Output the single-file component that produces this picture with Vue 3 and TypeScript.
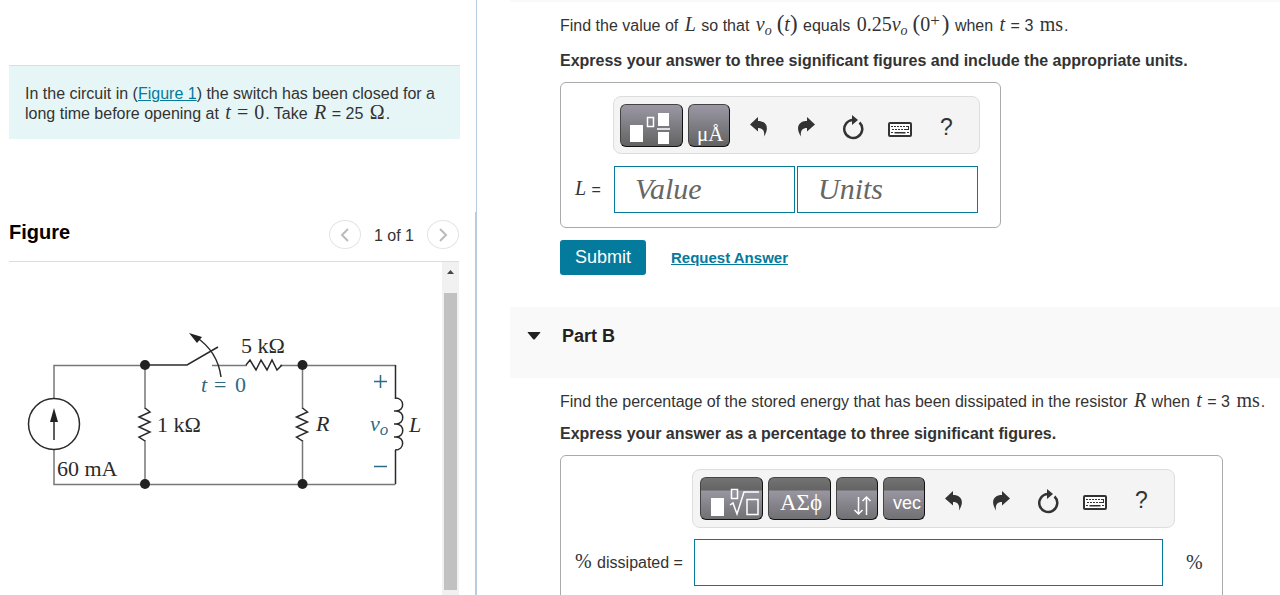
<script setup lang="ts">
import { ref } from 'vue'

const value = ref('')
const units = ref('')
const dissipated = ref('')

const tools = ['Undo', 'Redo', 'Reset', 'Keyboard shortcuts', 'Help']
const keysTop = [3, 6, 9, 12, 15, 18]
const keysMid = [4, 7, 10, 13, 16]
</script>

<template>
  <div class="page">
    <aside class="left">
      <div class="left-top">
        <p class="problem">
          In the circuit in (<a href="#figure">Figure 1</a>) the switch has been closed for a long time before opening at
          <span class="math"><i>t</i> <span class="rel">=</span> 0</span>. Take <span class="math"><i>R</i></span> = 25
          <span class="math">Ω</span>.
        </p>
      </div>
      <section id="figure" class="figure">
        <header class="figure-head">
          <h2>Figure</h2>
          <nav class="pager" aria-label="Figures">
            <button type="button" class="round" aria-label="Previous figure">
              <svg width="10" height="14" viewBox="0 0 10 14"><path d="M8 1 2 7l6 6" /></svg>
            </button>
            <span>1 of 1</span>
            <button type="button" class="round" aria-label="Next figure">
              <svg width="10" height="14" viewBox="0 0 10 14"><path d="m2 1 6 6-6 6" /></svg>
            </button>
          </nav>
        </header>
        <div class="viewer">
          <svg class="circuit" width="433" height="320" viewBox="9 262 433 320" role="img" aria-label="Circuit diagram">
            <g class="wire">
              <path d="M54 399V365.500H145M54 449V484.500H395.500M145 365V409M145 440V484M302.500 365V409M302.500 440V484M212 365.500H247M280 365.500H395.500" />
            </g>
            <g class="line">
              <path d="M145 365H187L218 347M395.500 365V399M395.500 450V484" />
              <path d="M221 377C219 362 211 347 196 337" />
              <circle cx="54" cy="424" r="25.500" />
              <path d="M54 440V417" />
              <path d="M145 408l5 4-11 5 11 5-11 5 11 5-11 5 6 4" />
              <path d="M302.500 408l5 4-11 5 11 5-11 5 11 5-11 5 6 4" />
              <path d="M246 365l4-5 6 10 5-10 6 10 5-10 5 10 5-5" />
              <path d="M395 398c10 0 10 13 1 13h-2h2c9 0 9 13 0 13h-2h2c9 0 9 13 0 13h-2h2c9 0 9 13-1 13" />
            </g>
            <path d="M54 408l-4 14h8zM189 333l13 4-5 6z" fill="#222" />
            <g fill="#222">
              <circle cx="145" cy="365" r="5" /><circle cx="302.500" cy="365" r="5" />
              <circle cx="145" cy="484" r="5" /><circle cx="302.500" cy="484" r="5" />
            </g>
            <g class="label">
              <text x="241" y="353">5 kΩ</text>
              <text x="157" y="432">1 kΩ</text>
              <text x="57" y="476">60 mA</text>
              <text x="316" y="431" font-style="italic">R</text>
              <text x="409" y="432" font-style="italic">L</text>
            </g>
            <g class="label blue">
              <text x="201" y="392" font-style="italic">t</text>
              <text x="214" y="392">=</text>
              <text x="235" y="392">0</text>
              <text x="370" y="431" font-style="italic">v<tspan dy="4" font-size="17">o</tspan></text>
            </g>
            <path d="M374 381.500h13M380.500 375v13M374 466.500h13" stroke="#2e6a86" stroke-width="1.500" />
          </svg>
          <div class="scrollbar">
            <svg width="7" height="4" viewBox="0 0 7 4"><path d="M0 4 3.500 0 7 4z" fill="#444" /></svg>
            <div class="thumb"></div>
          </div>
        </div>
      </section>
    </aside>

    <main class="right">
      <div class="strip"></div>
      <section class="part first">
        <p class="ask">
          Find the value of <span class="math"><i>L</i></span> so that
          <span class="math"><i>v<sub>o</sub></i> <span class="paren">(</span><i>t</i><span class="paren">)</span></span> equals
          <span class="math">0.25<i>v<sub>o</sub></i> <span class="paren">(</span>0<sup>+</sup><span class="paren">)</span></span> when
          <span class="math"><i>t</i></span> = 3 <span class="math">ms</span>.
        </p>
        <p class="instruction">Express your answer to three significant figures and include the appropriate units.</p>
        <form class="answer box-a" @submit.prevent>
          <div class="toolbar bar-a">
            <button type="button" class="tile wide" aria-label="Templates">
              <svg width="61" height="40" viewBox="0 0 61 40">
                <path d="M9 20h13v17H9zM37 8h11v13H37zM37 27h11v12H37z" fill="#fff" />
                <path d="M26.500 12.500h6v9h-6zM36 24h13" class="thin" />
              </svg>
            </button>
            <button type="button" class="tile" aria-label="Symbols">
              <svg width="40" height="40" viewBox="0 0 40 40"><text x="8" y="36" class="greek small">μÅ</text></svg>
            </button>
            <button v-for="tool in tools" :key="tool" type="button" class="tool" :aria-label="tool">
              <svg v-if="tool === 'Undo'" width="22" height="24" viewBox="0 0 22 24"><path d="M2 9.500 10 2v4c8 0 12 6 6 15.500C17 15 14 13 10 13V16.500z" fill="#333" /></svg>
              <svg v-else-if="tool === 'Redo'" width="22" height="24" viewBox="0 0 22 24"><path d="M20 9.500 12 2v4C4 6 0 12 6 21.500 5 15 8 13 12 13V16.500z" fill="#333" /></svg>
              <svg v-else-if="tool === 'Reset'" width="24" height="26" viewBox="0 0 24 26"><path d="M18.500 8.500A9 9 0 1 1 12 6" fill="none" stroke="#333" stroke-width="2.500" /><path d="m11 1 6 5-6 5z" fill="#333" /></svg>
              <svg v-else-if="tool === 'Keyboard shortcuts'" class="kb" width="24" height="15" viewBox="0 0 24 15">
                <rect x="1" y="1" width="22" height="13" rx="1" fill="#fff" stroke="#333" stroke-width="2" />
                <rect v-for="x in keysTop" :key="x" :x="x" y="4" width="2" height="1" fill="#333" />
                <rect v-for="x in keysMid" :key="x" :x="x" y="7" width="2" height="1" fill="#333" />
                <path d="M3 10h2v1H3zM6.500 10h11v1.500h-11zM19 10h2v1h-2zM20 4h1v4h-3V7h2z" fill="#333" />
              </svg>
              <span v-else>?</span>
            </button>
          </div>
          <div class="fields">
            <label for="value"><span class="math"><i>L</i></span> =</label>
            <input id="value" v-model="value" type="text" placeholder="Value" />
            <input v-model="units" type="text" placeholder="Units" aria-label="Units" />
          </div>
        </form>
        <div class="actions">
          <button type="button" class="submit">Submit</button>
          <a href="#request">Request Answer</a>
        </div>
      </section>

      <header class="part-head">
        <svg width="14" height="8" viewBox="0 0 14 8"><path d="M1 0h12q1 0 0 1L8 7q-1 1-2 0L1 1Q0 0 1 0z" fill="#222" /></svg>
        <h2>Part B</h2>
      </header>

      <section class="part second">
        <p class="ask">
          Find the percentage of the stored energy that has been dissipated in the resistor
          <span class="math"><i>R</i></span> when <span class="math"><i>t</i></span> = 3 <span class="math">ms</span>.
        </p>
        <p class="instruction">Express your answer as a percentage to three significant figures.</p>
        <form class="answer box-b" @submit.prevent>
          <div class="toolbar bar-b">
            <button type="button" class="tile wide" aria-label="Templates">
              <svg width="61" height="41" viewBox="0 0 61 41">
                <path d="M10 20h13v18H10z" fill="#fff" />
                <path d="M30.500 11.500h6v9h-6zM46 21.500h11v15H46zM29 27l3-2 4 11 7-22h15" class="thin" />
              </svg>
            </button>
            <button type="button" class="tile wide" aria-label="Greek letters">
              <svg width="60" height="41" viewBox="0 0 60 41"><text x="11" y="32" class="greek">ΑΣϕ</text></svg>
            </button>
            <button type="button" class="tile" aria-label="Arrows">
              <svg width="41" height="41" viewBox="0 0 41 41"><path d="M21.500 19v17m-4-4 4 4 4-4M29.500 37V19m-4 4 4-4 4 4" class="thin" /></svg>
            </button>
            <button type="button" class="tile vec">vec</button>
            <button v-for="tool in tools" :key="tool" type="button" class="tool" :aria-label="tool">
              <svg v-if="tool === 'Undo'" width="22" height="24" viewBox="0 0 22 24"><path d="M2 9.500 10 2v4c8 0 12 6 6 15.500C17 15 14 13 10 13V16.500z" fill="#333" /></svg>
              <svg v-else-if="tool === 'Redo'" width="22" height="24" viewBox="0 0 22 24"><path d="M20 9.500 12 2v4C4 6 0 12 6 21.500 5 15 8 13 12 13V16.500z" fill="#333" /></svg>
              <svg v-else-if="tool === 'Reset'" width="24" height="26" viewBox="0 0 24 26"><path d="M18.500 8.500A9 9 0 1 1 12 6" fill="none" stroke="#333" stroke-width="2.500" /><path d="m11 1 6 5-6 5z" fill="#333" /></svg>
              <svg v-else-if="tool === 'Keyboard shortcuts'" class="kb" width="24" height="15" viewBox="0 0 24 15">
                <rect x="1" y="1" width="22" height="13" rx="1" fill="#fff" stroke="#333" stroke-width="2" />
                <rect v-for="x in keysTop" :key="x" :x="x" y="4" width="2" height="1" fill="#333" />
                <rect v-for="x in keysMid" :key="x" :x="x" y="7" width="2" height="1" fill="#333" />
                <path d="M3 10h2v1H3zM6.500 10h11v1.500h-11zM19 10h2v1h-2zM20 4h1v4h-3V7h2z" fill="#333" />
              </svg>
              <span v-else>?</span>
            </button>
          </div>
          <div class="fields">
            <label for="dissipated"><span class="math percent">%</span> dissipated =</label>
            <input id="dissipated" v-model="dissipated" type="text" />
            <span class="math unit">%</span>
          </div>
        </form>
      </section>
    </main>
  </div>
</template>

<style>
body {
  margin: 0;
  background: #fff;
}
</style>

<style scoped>
* {
  box-sizing: border-box;
}
.page {
  display: grid;
  grid-template-columns: 477fr 803fr;
  grid-template-rows: minmax(0, 1fr);
  height: 100vh;
  overflow: hidden;
  font-family: "Liberation Sans", Arial, sans-serif;
  font-size: 16px;
  color: #333;
}
p, h2 {
  margin: 0;
}
svg {
  display: block;
}
button {
  font-family: inherit;
  padding: 0;
  cursor: pointer;
}
a {
  color: #047a9c;
}
.math {
  margin: 0 1px 0 2px;
  font-family: "Liberation Serif", "Times New Roman", serif;
  font-size: 20px;
  line-height: 1px;
  white-space: nowrap;
}
.math sub,
.math sup {
  font-size: 14px;
  line-height: 1px;
}
.math sup {
  margin-right: 2px;
  font-size: 17px;
  vertical-align: 5px;
}
.math sub {
  vertical-align: -4px;
}
.paren {
  font-size: 23px;
}
.rel {
  margin: 0 1px;
}
.left {
  display: flex;
  flex-direction: column;
  min-width: 0;
  min-height: 0;
}
.left-top {
  height: 212px;
  padding: 65px 16px 0 9px;
  border-right: 1px solid #b8cce0;
}
.problem {
  padding: 18px 16px 15px;
  border-top: 1px solid #ddd;
  background: #e6f6f7;
  line-height: 20px;
}
.figure {
  flex: 1;
  display: flex;
  flex-direction: column;
  min-height: 0;
  padding: 0 16px 0 9px;
  border-right: 2px solid #b8cce0;
}
.figure-head {
  display: flex;
  flex: none;
  justify-content: space-between;
  align-items: flex-start;
  height: 50px;
  padding-top: 8px;
  border-bottom: 1px solid #ddd;
}
.figure-head h2 {
  font-size: 20px;
  line-height: 24px;
  color: #000;
}
.pager {
  display: flex;
  align-items: flex-start;
  gap: 13px;
}
.pager span {
  line-height: 32px;
}
.round {
  display: flex;
  align-items: center;
  justify-content: center;
  width: 32px;
  height: 29px;
  border: 1px solid #e4e4e4;
  border-radius: 50%;
  background: #fff;
}
.round path {
  fill: none;
  stroke: #bbb;
  stroke-width: 2;
}
.viewer {
  flex: 1;
  display: flex;
  justify-content: space-between;
  min-height: 0;
}
.circuit {
  flex: none;
}
.wire,
.line {
  fill: none;
  stroke: #777;
  stroke-width: 1.5;
}
.line {
  stroke: #2a2a2a;
}
.label {
  font-family: "Liberation Serif", "Times New Roman", serif;
  font-size: 22px;
  fill: #2b2b2b;
}
.blue {
  fill: #2e6a86;
}
.scrollbar {
  flex: none;
  display: flex;
  flex-direction: column;
  align-items: center;
  gap: 19px;
  width: 17px;
  padding: 8px 2px 5px;
  background: #f1f1f1;
}
.thumb {
  flex: 1;
  width: 13px;
  background: #c1c1c1;
}
.right {
  min-width: 0;
  padding-left: 33px;
}
.strip {
  height: 2px;
  background: #f9f9f9;
}
.part {
  padding-left: 50px;
}
.ask {
  line-height: 20px;
  white-space: nowrap;
}
.first .ask {
  padding-top: 14px;
}
.instruction {
  font-weight: bold;
  line-height: 20px;
}
.first .instruction {
  margin: 15px 0 11px;
}
.answer {
  border: 1px solid #aaa;
  border-radius: 6px;
  padding: 13px 14px 14px;
}
.box-a {
  width: 441px;
}
.toolbar {
  display: flex;
  align-items: center;
  width: max-content;
  border: 1px solid #ddd;
  border-radius: 8px;
  background: #f4f4f4;
}
.bar-a {
  height: 58px;
  margin-left: 38px;
  padding: 0 9px 0 6px;
}
.bar-b {
  height: 59px;
  margin-left: 117px;
  padding: 0 9px 0 7px;
}
.tile {
  width: 42px;
  height: 43px;
  margin-right: 5px;
  border: 1px solid #111;
  border-top-color: #444;
  border-left-color: #444;
  border-radius: 6px;
  background: linear-gradient(#9b98a4, #626262);
  color: #fff;
  overflow: hidden;
}
.wide {
  width: 63px;
}
.bar-b .tile {
  background: linear-gradient(#737373, #646464 30%, #9996a1 31%, #717073);
}
.thin {
  fill: none;
  stroke: #fff;
  stroke-width: 1.5;
}
.greek {
  font-family: "Liberation Serif", serif;
  font-size: 23px;
  fill: #fff;
}
.small {
  font-size: 21px;
}
.vec {
  padding: 10px 0 0 6px;
  font-size: 18px;
}
.tool {
  display: flex;
  align-items: center;
  justify-content: center;
  width: 47px;
  height: 43px;
  padding-top: 4px;
  border: 0;
  background: none;
  color: #333;
  font-size: 23px;
}
.kb {
  margin-top: 4px;
}
.fields {
  display: flex;
  align-items: center;
  gap: 2px;
  margin-top: 12px;
}
.fields label {
  flex: none;
  width: 37px;
  white-space: nowrap;
}
.fields label .math {
  margin-left: 0;
}
.fields input {
  flex: 1;
  min-width: 0;
  height: 47px;
  padding: 0 20px 2px;
  border: 1px solid #047a9c;
  border-radius: 0;
  outline: 0;
  background: #fff;
  font: italic 30px "Liberation Serif", serif;
}
.fields input::placeholder {
  color: #666;
  opacity: 1;
}
.box-a .fields {
  padding-right: 8px;
}
.actions {
  display: flex;
  align-items: center;
  gap: 25px;
  margin-top: 12px;
}
.submit {
  width: 86px;
  height: 35px;
  border: 0;
  border-radius: 3px;
  background: #047a9c;
  color: #fff;
  font-size: 18px;
}
.actions a {
  font-size: 15px;
  font-weight: bold;
}
.part-head {
  display: flex;
  align-items: center;
  gap: 21px;
  height: 71px;
  margin-top: 32px;
  padding: 0 17px 13px;
  background: #f9f9f9;
}
.part-head h2 {
  font-size: 18px;
  color: #222;
}
.second .ask {
  padding-top: 14px;
}
.second .instruction {
  margin: 12px 0 11px;
}
.box-b {
  width: 663px;
}
.box-b .fields {
  margin-top: 11px;
}
.box-b .fields label {
  width: 117px;
}
.box-b .unit {
  width: 43px;
  margin: 0;
  padding-left: 21px;
}
</style>
